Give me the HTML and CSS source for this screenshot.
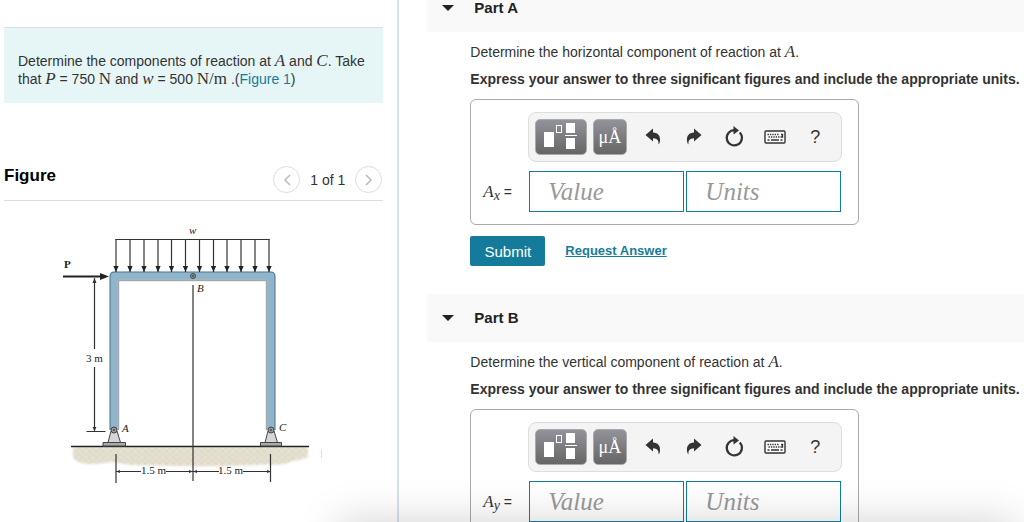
FILE: index.html
```html
<!DOCTYPE html>
<html lang="en">
<head>
    <meta charset="UTF-8">
    <meta name="viewport" content="width=device-width, initial-scale=1.0">
    <title>Frame reactions</title>
    <link rel="stylesheet" href="styles.css">
</head>
<body>
    <!-- shared icons -->
    <svg class="sprite" aria-hidden="true">
        <symbol id="icon-template" viewBox="0 0 34 28">
            <rect x="0" y="9" width="10" height="15" fill="#fff"/>
            <rect x="12.500" y="2.500" width="5" height="7" fill="none" stroke="#fff"/>
            <rect x="22" y="0" width="9" height="10" fill="#fff"/>
            <rect x="21" y="12" width="12" height="1" fill="#fff"/>
            <rect x="22" y="15" width="9" height="11" fill="#fff"/>
        </symbol>
        <symbol id="icon-undo" viewBox="0 0 16 18">
            <path d="M.5 7L8 .5v4c5 0 7.500 3.500 7 8.500-.2 1.500-.6 2.500-1.500 3.500.4-4-1.200-6-5.500-6.200V13.500z" fill="#333"/>
        </symbol>
        <symbol id="icon-redo" viewBox="0 0 16 18">
            <path d="M15.500 7L8 .5v4C3 4.500.5 8 1 13c.2 1.500.6 2.500 1.500 3.500-.4-4 1.200-6 5.500-6.200V13.500z" fill="#333"/>
        </symbol>
        <symbol id="icon-reset" viewBox="0 0 20 22">
            <path d="M11 4.200A7.600 7.600 0 1 0 15.800 6.500" fill="none" stroke="#333" stroke-width="2.200"/>
            <path d="M9.500 0l5.500 4.500-5.500 4z" fill="#333"/>
        </symbol>
        <symbol id="icon-keyboard" viewBox="0 0 22 14">
            <rect x="1" y="1" width="20" height="12" rx="1" fill="#fff" stroke="#333" stroke-width="1.400"/>
            <path d="M3.500 4.500h12M4.500 7h11" stroke="#333" stroke-width="1.600" stroke-dasharray="1.400 1"/>
            <path d="M17 4.500h1.500v2.500h-2" fill="none" stroke="#333" stroke-width="1.400"/>
            <path d="M3.500 10h2M7 10h8M16.500 10h2" stroke="#333" stroke-width="1.400"/>
        </symbol>
    </svg>

    <aside class="sidebar">
        <p class="problem">Determine the components of reaction at <i class="math">A</i> and <i class="math">C</i>. Take that <i class="math">P</i> = 750 <span class="math">N</span> and <i class="math">w</i> = 500 <span class="math">N/m</span> .(<a href="#figure">Figure 1</a>)</p>

        <div class="figure-header">
            <h2>Figure</h2>
            <div class="pager">
                <button type="button" aria-label="Previous figure">
                    <svg width="10" height="14" viewBox="0 0 10 14"><path d="M8 2L3 7l5 5"/></svg>
                </button>
                <span>1 of 1</span>
                <button type="button" aria-label="Next figure">
                    <svg width="10" height="14" viewBox="0 0 10 14"><path d="M2 2l5 5-5 5"/></svg>
                </button>
            </div>
        </div>

        <svg class="frame" id="figure" width="320" height="280" viewBox="10 212 320 280" role="img" aria-label="Loaded frame with pins at A, B and C">
            <defs>
                <pattern id="gravel" width="7" height="6" patternUnits="userSpaceOnUse">
                    <rect width="7" height="6" fill="#ddd7c6"/>
                    <circle cx="2" cy="1.500" r="1.500" fill="#f1ecdf"/>
                    <circle cx="5.500" cy="4.500" r="1.500" fill="#efe9da"/>
                </pattern>
                <marker id="tip" viewBox="0 0 6 6" refX="6" refY="3" markerWidth="6" markerHeight="6" orient="auto" markerUnits="userSpaceOnUse">
                    <path d="M0 0.400L6 3 0 5.600z" fill="#222"/>
                </marker>
                <filter id="soft"><feGaussianBlur stdDeviation="0.800"/></filter>
            </defs>

            <!-- ground -->
            <path d="M73 447h235v9c-3 5-14 3-20 7-10 3-22 1-32 2-45 2-85 1-125 0-12-1-17-4-27-2-12 2-27 2-31-6z" fill="url(#gravel)" filter="url(#soft)"/>
            <path d="M71 446.500h238" stroke="#222" stroke-width="1.300"/>

            <!-- members -->
            <path d="M114 430V276h157v154" fill="none" stroke="#47738b" stroke-width="9" stroke-linejoin="round"/>
            <path d="M114 430V276h157v154" fill="none" stroke="#90b4ca" stroke-width="7" stroke-linejoin="round"/>
            <path d="M118.500 430V280.500h148V430" fill="none" stroke="#d5d9dc" stroke-width="2"/>
            <path d="M118.500 430V280.500h148V430" fill="none" stroke="#8a8f93" stroke-width=".7"/>

            <!-- distributed load -->
            <path d="M115.500 239.500h154" stroke="#333"/>
            <g stroke="#333" stroke-width="1.200">
                <path d="M116 239v33" marker-end="url(#tip)"/>
                <path d="M130 239v33" marker-end="url(#tip)"/>
                <path d="M144 239v33" marker-end="url(#tip)"/>
                <path d="M158 239v33" marker-end="url(#tip)"/>
                <path d="M171.500 239v33" marker-end="url(#tip)"/>
                <path d="M185.500 239v33" marker-end="url(#tip)"/>
                <path d="M199.500 239v33" marker-end="url(#tip)"/>
                <path d="M213.500 239v33" marker-end="url(#tip)"/>
                <path d="M227 239v33" marker-end="url(#tip)"/>
                <path d="M241 239v33" marker-end="url(#tip)"/>
                <path d="M255 239v33" marker-end="url(#tip)"/>
                <path d="M269 239v33" marker-end="url(#tip)"/>
            </g>

            <!-- force P -->
            <path d="M63 276.500h39" stroke="#222" stroke-width="1.800"/>
            <path d="M100 273l9 3.500-9 3.500z" fill="#222"/>

            <!-- dimensions -->
            <g stroke="#333" stroke-width="1.200">
                <path d="M94.500 278v71M94.500 367v64M86.500 431.500h19M193 285v196M116 454v29M270.500 454v28M116 471.500h25M166 471.500h53M243 471.500h28" fill="none"/>
            </g>
            <path d="M92.500 283l2-5 2 5zM92.500 427l2 4 2-4zM116 471.500l4-1.500v3zM193 471.500l-4-1.500v3zM193 471.500l4-1.500v3zM271 471.500l-4-1.500v3z" fill="#333"/>

            <!-- supports -->
            <g stroke="#444" stroke-width="1">
                <path d="M103 442.500h22.500v3.500H103zM260.500 442.500h21v3.500h-21z" fill="#aaa"/>
                <path d="M111 431l-3 11.500h12.500L117 431zM268 431l-3 11.500h12.500L274 431z" fill="#d3d5d8"/>
                <circle cx="114" cy="430" r="3" fill="#999"/>
                <circle cx="271" cy="430" r="3" fill="#999"/>
                <circle cx="193" cy="276" r="2.500" fill="#8799a3"/>
            </g>
            <path d="M113 430h2M270 430h2M192 276h2" stroke="#222"/>

            <g class="frame-labels">
                <text x="189" y="234" class="italic">w</text>
                <text x="64" y="268" class="bold">P</text>
                <text x="197" y="292" class="italic">B</text>
                <text x="86" y="362">3 m</text>
                <text x="122" y="432" class="italic">A</text>
                <text x="279" y="431" class="italic">C</text>
                <text x="141" y="474">1.5 m</text>
                <text x="218" y="474">1.5 m</text>
            </g>
            <path d="M321.500 450v8" stroke="#ddd"/>
        </svg>
    </aside>

    <main class="content">
        <section class="part">
            <h2 class="part-header"><span class="caret"></span>Part A</h2>
            <div class="part-body">
                <p>Determine the horizontal component of reaction at <i class="math">A</i>.</p>
                <p class="instructions">Express your answer to three significant figures and include the appropriate units.</p>
                <form class="answer">
                    <div class="toolbar">
                        <button type="button" class="dark wide" aria-label="Templates"><svg width="34" height="28"><use href="#icon-template"/></svg></button>
                        <button type="button" class="dark">μÅ</button>
                        <button type="button" class="tool" aria-label="Undo"><svg width="16" height="18"><use href="#icon-undo"/></svg></button>
                        <button type="button" class="tool" aria-label="Redo"><svg width="16" height="18"><use href="#icon-redo"/></svg></button>
                        <button type="button" class="tool" aria-label="Reset"><svg width="20" height="22"><use href="#icon-reset"/></svg></button>
                        <button type="button" class="tool" aria-label="Keyboard shortcuts"><svg width="22" height="14"><use href="#icon-keyboard"/></svg></button>
                        <button type="button" class="tool help">?</button>
                    </div>
                    <label for="value-a"><i class="math">A<sub>x</sub></i> =</label>
                    <div class="fields">
                        <input type="text" id="value-a" placeholder="Value">
                        <input type="text" aria-label="Units" placeholder="Units">
                    </div>
                </form>
                <div class="actions">
                    <button type="button" class="submit">Submit</button>
                    <a href="#answer">Request Answer</a>
                </div>
            </div>
        </section>

        <section class="part">
            <h2 class="part-header"><span class="caret"></span>Part B</h2>
            <div class="part-body">
                <p>Determine the vertical component of reaction at <i class="math">A</i>.</p>
                <p class="instructions">Express your answer to three significant figures and include the appropriate units.</p>
                <form class="answer">
                    <div class="toolbar">
                        <button type="button" class="dark wide" aria-label="Templates"><svg width="34" height="28"><use href="#icon-template"/></svg></button>
                        <button type="button" class="dark">μÅ</button>
                        <button type="button" class="tool" aria-label="Undo"><svg width="16" height="18"><use href="#icon-undo"/></svg></button>
                        <button type="button" class="tool" aria-label="Redo"><svg width="16" height="18"><use href="#icon-redo"/></svg></button>
                        <button type="button" class="tool" aria-label="Reset"><svg width="20" height="22"><use href="#icon-reset"/></svg></button>
                        <button type="button" class="tool" aria-label="Keyboard shortcuts"><svg width="22" height="14"><use href="#icon-keyboard"/></svg></button>
                        <button type="button" class="tool help">?</button>
                    </div>
                    <label for="value-b"><i class="math">A<sub>y</sub></i> =</label>
                    <div class="fields">
                        <input type="text" id="value-b" placeholder="Value">
                        <input type="text" aria-label="Units" placeholder="Units">
                    </div>
                </form>
            </div>
        </section>
    </main>
    <div class="fade"></div>
</body>
</html>
```

FILE: styles.css
```css
:root {
    --teal: #147c9a;
    --text: #333;
    --tint: #e6f6f7;
    --line: #ddd;
}
* {
    box-sizing: border-box;
}
body {
    font-family: "Liberation Sans", Arial, sans-serif;
    font-size: 14px;
    line-height: 18px;
    color: var(--text);
    background-color: #fff;
    margin: 0;
    display: flex;
    height: 100vh;
    overflow: hidden;
}
h2, p {
    margin: 0;
}
a {
    color: var(--teal);
}
button {
    font-family: inherit;
    padding: 0;
    border: none;
    cursor: pointer;
}
.sprite {
    position: absolute;
    width: 0;
    height: 0;
}
.math {
    font-family: "Liberation Serif", "Times New Roman", serif;
    font-size: 17px;
    line-height: 16px;
}
.sidebar {
    flex: 0 0 39%;
    padding: 27px 14px 0 4px;
    border-right: 2px solid #d5e1eb;
}
.problem {
    padding: 24px 14px 15px;
    border-top: 1px solid var(--line);
    background-color: var(--tint);
}
.problem a {
    text-decoration: none;
}
.figure-header {
    display: flex;
    justify-content: space-between;
    margin-top: 63px;
    padding-bottom: 7px;
    border-bottom: 1px solid var(--line);
}
.figure-header h2 {
    font-size: 17px;
    line-height: 20px;
    color: #000;
}
.pager {
    display: flex;
    align-items: center;
    gap: 10px;
    padding-right: 1px;
}
.pager button {
    display: flex;
    align-items: center;
    justify-content: center;
    width: 27px;
    height: 27px;
    border: 1px solid var(--line);
    border-radius: 50%;
    background-color: #fff;
}
.pager path {
    fill: none;
    stroke: #bbb;
    stroke-width: 1.5;
}
.frame {
    display: block;
    margin: 11px 0 0 6px;
}
.frame-labels {
    font-family: "Liberation Serif", serif;
    font-size: 11px;
    fill: #222;
}
.italic {
    font-style: italic;
}
.bold {
    font-weight: bold;
}
.content {
    flex: 1;
    min-width: 0;
    padding-left: 28px;
}
.part-header {
    display: flex;
    align-items: center;
    gap: 20px;
    padding: 16px 15px;
    font-size: 15px;
    line-height: 16px;
    color: #222;
    background-color: #f9f9f9;
}
.part:first-child .part-header {
    padding-top: 0;
}
.caret {
    border: 6px solid transparent;
    border-top-color: #222;
    border-bottom: none;
}
.part-body {
    padding: 11px 0 28px 43px;
}
.instructions {
    margin-top: 9px;
    font-weight: bold;
    white-space: nowrap;
}
.answer {
    display: grid;
    grid-template-columns: 45px 314px;
    row-gap: 9px;
    width: 389px;
    margin-top: 11px;
    padding: 12px;
    border: 1px solid #aaa;
    border-radius: 6px;
}
.toolbar {
    grid-column: 2;
    display: flex;
    align-items: center;
    height: 50px;
    padding: 0 6px;
    border: 1px solid var(--line);
    border-radius: 8px;
    background-color: #f4f4f4;
}
.dark {
    width: 35px;
    height: 36px;
    margin-right: 6px;
    border: 1px solid #aaa;
    border-radius: 5px;
    color: #fff;
    background: linear-gradient(#92929a, #666);
    font-family: "Liberation Serif", serif;
    font-size: 18px;
}
.wide {
    width: 52px;
}
.dark svg, .tool svg {
    display: block;
    margin: auto;
}
.tool {
    width: 41px;
    height: 36px;
    color: var(--text);
    background: none;
}
.help {
    font-size: 18px;
}
.answer label {
    align-self: center;
}
.answer sub {
    font-size: 14px;
    line-height: 0;
    vertical-align: -3px;
}
.fields {
    display: grid;
    grid-template-columns: 1fr 1fr;
    gap: 2px;
    padding: 0 1px;
}
.fields input {
    min-width: 0;
    height: 41px;
    padding: 0 18px;
    border: 1px solid var(--teal);
    background-color: #fff;
    font-family: "Liberation Serif", serif;
    font-size: 25px;
    font-style: italic;
}
.fields input::placeholder {
    color: #999;
}
.actions {
    display: flex;
    align-items: center;
    gap: 20px;
    margin-top: 11px;
}
.submit {
    width: 75px;
    height: 30px;
    border-radius: 2px;
    color: #fff;
    background-color: var(--teal);
    font-size: 15px;
}
.actions a {
    font-size: 13px;
    font-weight: bold;
}
/* shadow cast upwards from below the window */
.fade {
    position: fixed;
    left: 33%;
    right: 8px;
    bottom: -60px;
    height: 60px;
    box-shadow: 0 0 44px rgba(0, 0, 0, 0.18);
    pointer-events: none;
}
```
